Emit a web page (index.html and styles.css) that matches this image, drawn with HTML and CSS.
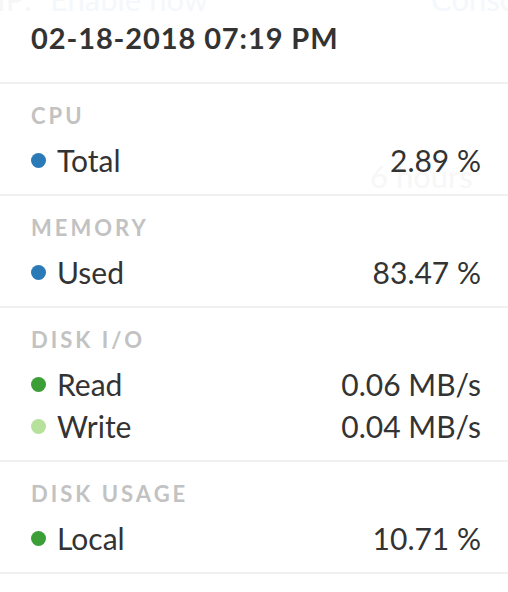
FILE: index.html
```html
<!DOCTYPE html>
<html>
<head>
<meta charset="utf-8">
<link rel="stylesheet" href="styles.css">
</head>
<body>
<div class="stage">
  <div class="ghost">
    <span class="ghost-ip">IP:</span>
    <span class="ghost-enable">Enable now</span>
    <span class="ghost-conso">Conso</span>
    <span class="ghost-hours">6 hours</span>
  </div>
  <div class="panel">
    <div class="header">02-18-2018 07:19 PM</div>
    <div class="section">
      <div class="label">CPU</div>
      <div class="row"><span class="dot blue"></span><span class="name">Total</span><span class="value">2.89 %</span></div>
    </div>
    <div class="section">
      <div class="label">MEMORY</div>
      <div class="row"><span class="dot blue"></span><span class="name">Used</span><span class="value">83.47 %</span></div>
    </div>
    <div class="section">
      <div class="label">DISK I/O</div>
      <div class="row"><span class="dot green"></span><span class="name">Read</span><span class="value">0.06 MB/s</span></div>
      <div class="row"><span class="dot lightgreen"></span><span class="name">Write</span><span class="value">0.04 MB/s</span></div>
    </div>
    <div class="section">
      <div class="label">DISK USAGE</div>
      <div class="row"><span class="dot green"></span><span class="name">Local</span><span class="value">10.71 %</span></div>
    </div>
  </div>
</div>
</body>
</html>
```
FILE: styles.css
```css
html, body {
  margin: 0;
  padding: 0;
  background: #ffffff;
}
body {
  font-family: Lato, "Open Sans", sans-serif;
  color: #333333;
}
.stage {
  position: relative;
  width: 508px;
  height: 592px;
  overflow: hidden;
}
.ghost {
  position: absolute;
  inset: 0;
  color: #f4f7fb;
  font-size: 31px;
}
.ghost span {
  position: absolute;
}
.ghost-ip { left: -3px; top: -20px; color: #f6f6f6; }
.ghost-enable { left: 50px; top: -20px; }
.ghost-conso { left: 431px; top: -20px; }
.ghost-hours { left: 370px; top: 157px; color: #f7f7f7; }
.panel {
  position: relative;
  display: flex;
  flex-direction: column;
}
.header {
  box-sizing: border-box;
  height: 84px;
  padding: 0 0 8px 31px;
  display: flex;
  align-items: center;
  font-size: 29px;
  font-weight: 700;
  letter-spacing: 0.9px;
  border-bottom: 2px solid #f0f0f0;
}
.section {
  display: flex;
  flex-direction: column;
  padding: 19px 27px 13px 31px;
  border-bottom: 2px solid #f0f0f0;
}
.label {
  font-size: 22px;
  font-weight: 700;
  letter-spacing: 3px;
  color: #c2c2c2;
  line-height: 26px;
  margin-bottom: 10px;
}
.row {
  display: flex;
  align-items: center;
  height: 42px;
  font-size: 30px;
}
.dot {
  width: 15px;
  height: 15px;
  border-radius: 50%;
  margin-right: 11px;
  flex: none;
}
.blue { background: #2a7ab8; }
.green { background: #3b9e37; }
.lightgreen { background: #b6e19b; }
.name {
  flex: 1;
}
.value {
  text-align: right;
}
```
